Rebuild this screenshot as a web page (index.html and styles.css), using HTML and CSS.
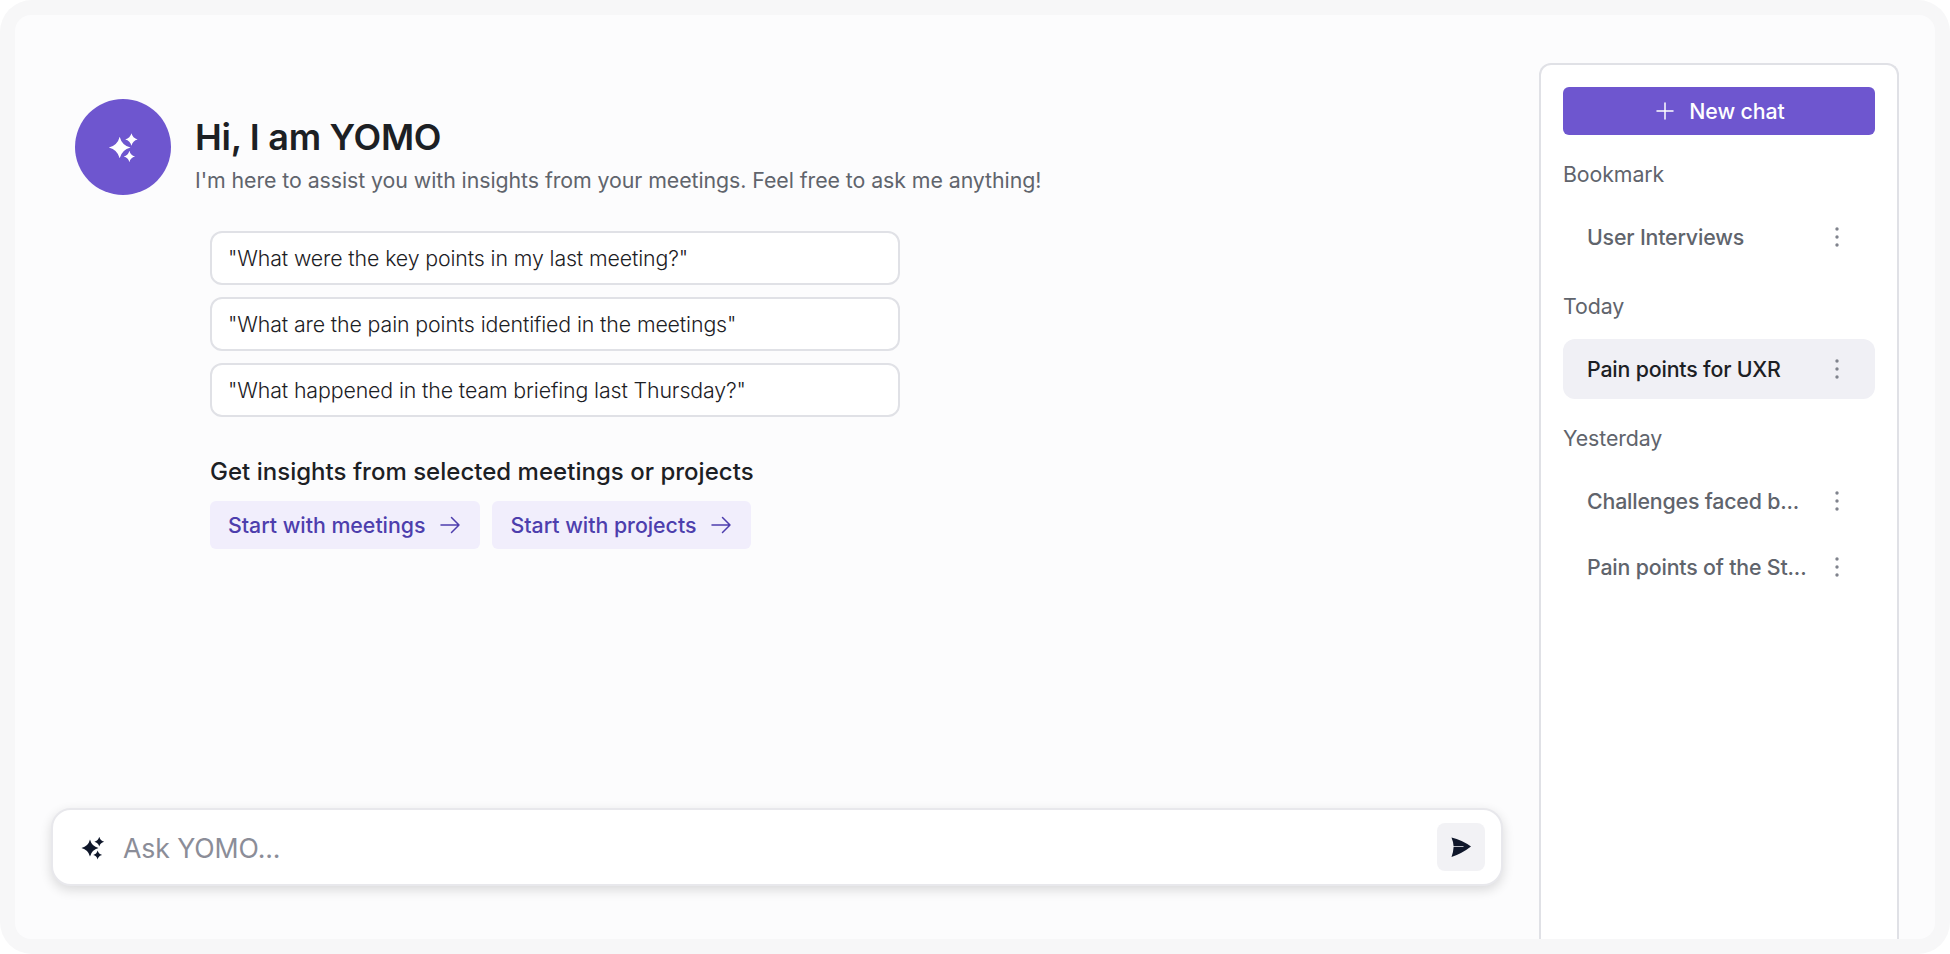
FILE: index.html
```html
<!DOCTYPE html>
<html lang="en">
<head>
    <meta charset="UTF-8">
    <title>YOMO</title>
    <link rel="stylesheet" href="styles.css">
</head>
<body>
    <svg class="sprite" aria-hidden="true">
        <symbol id="sparkles" viewBox="0 0 32 32">
            <path d="M12.3 5.5Q14.4 13.9 22.8 16Q14.4 18.1 12.3 26.5Q10.2 18.1 1.8 16Q10.2 13.9 12.3 5.5Z"/>
            <path d="M23.7 2.3Q24.9 7.1 29.7 8.3Q24.9 9.5 23.7 14.3Q22.5 9.5 17.7 8.3Q22.5 7.1 23.7 2.3Z"/>
            <path d="M21.7 19.2Q22.8 23.6 27.2 24.7Q22.8 25.8 21.7 30.2Q20.6 25.8 16.2 24.7Q20.6 23.6 21.7 19.2Z"/>
        </symbol>
        <symbol id="dots" viewBox="0 0 24 24">
            <circle cx="12" cy="4" r="1.7"/>
            <circle cx="12" cy="12" r="1.7"/>
            <circle cx="12" cy="20" r="1.7"/>
        </symbol>
        <symbol id="arrow" viewBox="0 0 24 24">
            <path d="M3 12H21M13.5 4.5L21 12L13.5 19.5" fill="none" stroke="currentColor" stroke-width="1.5" stroke-linecap="round" stroke-linejoin="round"/>
        </symbol>
    </svg>

    <div class="frame">
        <div class="app">
            <main class="chat">
                <div class="intro">
                    <div class="hero">
                        <div class="avatar"><svg class="avatar-icon"><use href="#sparkles"/></svg></div>
                        <div class="hero-text">
                            <h1>Hi, I am YOMO</h1>
                            <p>I'm here to assist you with insights from your meetings. Feel free to ask me anything!</p>
                        </div>
                    </div>

                    <div class="prompts">
                        <button class="prompt">"What were the key points in my last meeting?"</button>
                        <button class="prompt">"What are the pain points identified in the meetings"</button>
                        <button class="prompt">"What happened in the team briefing last Thursday?"</button>
                    </div>

                    <div class="insights">
                        <h2>Get insights from selected meetings or projects</h2>
                        <div class="insight-actions">
                            <button class="start">Start with meetings <svg class="start-icon"><use href="#arrow"/></svg></button>
                            <button class="start">Start with projects <svg class="start-icon"><use href="#arrow"/></svg></button>
                        </div>
                    </div>
                </div>

                <div class="ask">
                    <svg class="ask-icon"><use href="#sparkles"/></svg>
                    <input class="ask-input" type="text" placeholder="Ask YOMO...">
                    <button class="send" aria-label="Send">
                        <svg class="send-icon" viewBox="0 0 20 20">
                            <path d="M0.5 0.5Q11 3 20 9.5Q11 16.5 0.5 20Q2.4 15 2.6 10.1H12.5V9.3H2.6Q2.4 5 0.5 0.5Z"/>
                        </svg>
                    </button>
                </div>
            </main>

            <aside class="sidebar">
                <button class="new-chat">
                    <svg class="plus-icon" viewBox="0 0 24 24"><path d="M12 4V20M4 12H20"/></svg>
                    New chat
                </button>

                <div class="group-label">Bookmark</div>
                <div class="thread"><span class="thread-name">User Interviews</span><svg class="thread-menu"><use href="#dots"/></svg></div>

                <div class="group-label">Today</div>
                <div class="thread active"><span class="thread-name">Pain points for UXR</span><svg class="thread-menu"><use href="#dots"/></svg></div>

                <div class="group-label">Yesterday</div>
                <div class="thread-list">
                    <div class="thread"><span class="thread-name">Challenges faced b...</span><svg class="thread-menu"><use href="#dots"/></svg></div>
                    <div class="thread"><span class="thread-name">Pain points of the St...</span><svg class="thread-menu"><use href="#dots"/></svg></div>
                </div>
            </aside>
        </div>
    </div>
</body>
</html>
```
FILE: styles.css
```css
* {
    box-sizing: border-box;
}

body {
    margin: 0;
    height: 954px;
    background-color: #fff;
    font-family: Inter, "Noto Sans", sans-serif;
    font-size: 21.33px;
    letter-spacing: -0.1px;
    color: #1c2024;
    overflow: hidden;
}

button {
    font-family: inherit;
    font-size: inherit;
    letter-spacing: inherit;
    border: none;
    padding: 0;
    cursor: pointer;
}

.sprite {
    display: none;
}

.frame {
    height: 100%;
    padding: 15px;
    background-color: #f7f7f8;
    border-radius: 32px;
}

.app {
    display: flex;
    height: 100%;
    padding-top: 48px;
    padding-right: 36px;
    background-color: #fcfcfd;
    border-radius: 16px;
    overflow: hidden;
}

.chat {
    flex: 1;
    display: flex;
    flex-direction: column;
    justify-content: space-between;
    padding: 36px 36px 53px 36px;
}

.hero {
    display: flex;
    gap: 24px;
    margin-left: 24px;
}

.avatar {
    display: flex;
    align-items: center;
    justify-content: center;
    width: 96px;
    height: 96px;
    border-radius: 50%;
    background-color: #6e56cf;
}

.avatar-icon {
    width: 33px;
    height: 33px;
    fill: #fff;
}

.hero-text {
    padding-top: 16px;
}

h1 {
    margin: 0 0 7px;
    font-size: 36px;
    line-height: 44px;
    font-weight: 600;
    letter-spacing: -0.3px;
}

.hero-text p {
    margin: 0;
    line-height: 28px;
    letter-spacing: -0.07px;
    color: #60646c;
}

.prompts {
    display: flex;
    flex-direction: column;
    gap: 12px;
    width: 690px;
    margin: 36px 0 0 159px;
}

.prompt {
    height: 54px;
    padding: 0 16px;
    text-align: left;
    letter-spacing: -0.12px;
    color: #1c2024;
    font-weight: 300;
    background-color: #fff;
    border: 2px solid #e0e1e6;
    border-radius: 12px;
}

.insights {
    margin: 39px 0 0 159px;
}

h2 {
    margin: 0 0 13px;
    font-size: 24px;
    line-height: 32px;
    font-weight: 450;
    letter-spacing: 0.02px;
}

.insight-actions {
    display: flex;
    gap: 12px;
}

.start {
    display: flex;
    align-items: center;
    gap: 13px;
    height: 48px;
    padding: 0 18px;
    font-weight: 500;
    letter-spacing: -0.02px;
    color: #4d3ead;
    background-color: #f1eefc;
    border-radius: 6px;
}

.start-icon {
    width: 24px;
    height: 24px;
}

.ask {
    display: flex;
    align-items: center;
    gap: 17px;
    height: 78px;
    padding: 0 16px 0 27px;
    background-color: #fff;
    border: 2px solid #e8e8ec;
    border-radius: 20px;
    box-shadow: 0 4px 12px rgba(0, 0, 0, 0.14);
}

.ask-icon {
    flex: none;
    width: 26px;
    height: 26px;
    margin-top: 2px;
    fill: #0f172a;
}

.ask-input {
    flex: 1;
    min-width: 0;
    margin-top: 2px;
    border: none;
    outline: none;
    padding: 0;
    font-family: inherit;
    font-size: 26.67px;
    letter-spacing: -0.1px;
    background: transparent;
}

.ask-input::placeholder {
    color: #8b8d98;
    opacity: 1;
}

.send {
    display: flex;
    align-items: center;
    justify-content: center;
    flex: none;
    width: 48px;
    height: 48px;
    background-color: #f2f2f5;
    border-radius: 8px;
}

.send-icon {
    width: 20px;
    height: 20px;
    fill: #0f172a;
}

.sidebar {
    flex: none;
    width: 360px;
    padding: 22px 22px 0;
    background-color: #fff;
    border: 2px solid #e0e1e6;
    border-bottom: none;
    border-radius: 12px 12px 0 0;
}

.new-chat {
    display: flex;
    align-items: center;
    justify-content: center;
    gap: 12px;
    width: 100%;
    height: 48px;
    font-weight: 500;
    color: #fff;
    background-color: #6e56cf;
    border-radius: 6px;
}

.plus-icon {
    width: 24px;
    height: 24px;
    fill: none;
    stroke: #fff;
    stroke-width: 1.5;
    stroke-linecap: round;
}

.group-label {
    margin: 24px 0 18px;
    line-height: 30px;
    color: #60646c;
}

.thread-list {
    display: flex;
    flex-direction: column;
    gap: 6px;
}

.thread {
    display: flex;
    align-items: center;
    justify-content: space-between;
    height: 60px;
    padding: 0 26px 0 24px;
    font-weight: 450;
    letter-spacing: -0.17px;
    color: #60646c;
    border-radius: 12px;
}

.thread.active {
    color: #1c2024;
    background-color: #f0f0f5;
}

.thread-menu {
    width: 24px;
    height: 24px;
    fill: #80838d;
}
```
